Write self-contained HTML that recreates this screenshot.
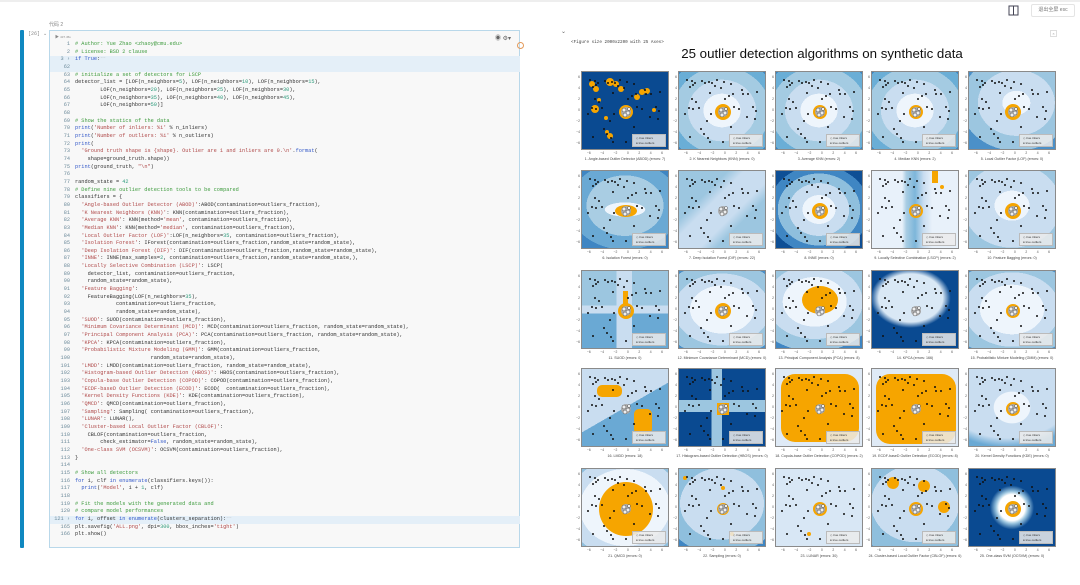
<!DOCTYPE html>
<html><head><meta charset="utf-8"><style>
*{margin:0;padding:0;box-sizing:border-box}
body{width:1080px;height:585px;background:#fff;position:relative;overflow:hidden;font-family:"Liberation Sans","Noto Sans CJK SC",sans-serif}
.a{position:absolute}
#code{position:absolute;left:49px;top:30px;width:471px;height:518px;background:#f8f8f8;border:1px solid #b9d8ea}
.ln{position:absolute;left:0;width:20px;text-align:right;color:#6c8a9a}
.cl{position:absolute;left:25px;white-space:pre;color:#333}
.row{position:absolute;left:0;width:470px;height:7.66px;font:5.25px/7.66px "Liberation Mono",monospace}
.hl{background:#e4eff8}
.c{color:#3c9a3c}.s{color:#b04a4a}.k{color:#3358c8}.n{color:#2a9a7a}
.p{position:absolute;width:88px;height:79px;border:1px solid #8a8a8a;overflow:hidden}
.p svg{position:absolute;left:0;top:0}
.rings{background:radial-gradient(ellipse 62px 56px at 50% 50%,#eef5fc 0 30%,#c9ddf0 30% 55%,#a4cbe2 55% 78%,#6aaed6 78% 95%,#3a85c2 95%)}
.navy{background:#0a4a91}
.lg{position:absolute;right:2px;bottom:2px;width:34px;height:13px;background:rgba(235,235,235,.85);border:.5px solid #bbb;font:3px/5px "Liberation Sans",sans-serif;color:#333;padding:1px 0 0 3px}
.cap{position:absolute;width:100px;text-align:center;font:3.6px "Liberation Sans",sans-serif;color:#444;white-space:nowrap}
.xt{position:absolute;width:88px;display:flex;justify-content:space-between;padding:0 6px;font:3.3px "Liberation Sans",sans-serif;color:#555}
.yt{position:absolute;width:6px;height:79px;display:flex;flex-direction:column;justify-content:space-between;padding:5px 0;font:3.3px/3.3px "Liberation Sans",sans-serif;color:#555;text-align:right}
</style></head><body>
<div class="a" style="left:0;top:0;width:1080px;height:2px;background:#eee"></div>
<svg class="a" style="left:1008px;top:5px" width="11" height="11"><rect x="1" y="1" width="9" height="9" fill="none" stroke="#445" stroke-width="1"/><line x1="5.5" y1="1" x2="5.5" y2="10" stroke="#445"/></svg>
<div class="a" style="left:1031px;top:4px;width:44px;height:13px;border:1px solid #e4e4e4;border-radius:2px;font-size:5px;line-height:11px;text-align:center;color:#777">退出全屏 esc</div>
<div class="a" style="left:1050px;top:30px;width:7px;height:7px;border:1px solid #ddd;font-size:4px;color:#999;text-align:center;line-height:5px">×</div>

<div class="a" style="left:49px;top:21px;font-size:5px;color:#888">代码 2</div>
<div class="a" style="left:20px;top:30px;width:4px;height:518px;background:#1088c0;border-radius:1px"></div>
<div class="a" style="left:28px;top:31px;font:5px 'Liberation Mono',monospace;color:#888">[26] ⌄</div>
<div id="code">
<div class="a" style="left:5px;top:3px;font-size:4px;color:#888">▶ <span style="font-size:3px">437.45s</span></div>
<div class="a" style="left:445px;top:2px;width:24px;font-size:6px;color:#666;white-space:nowrap">◉ ⚙▾</div>
<div class="a" style="left:467px;top:11px;width:7px;height:7px;border:1px solid #e49a5a;border-radius:50%"></div>
<div style="position:absolute;left:0;top:10px;width:470px">
<div class="row" style="top:0"><span class="ln">1</span><span class="cl c"># Author: Yue Zhao &lt;zhaoy@cmu.edu&gt;</span></div>
<div class="row" style="top:7.66px"><span class="ln">2</span><span class="cl c"># License: BSD 2 clause</span></div>
<div class="row hl" style="top:15.32px"><span class="ln">3 ›</span><span class="cl"><span class="k">if True</span>:<span style="color:#aaa">⋯</span></span></div>
<div class="row hl" style="top:22.98px"><span class="ln">62</span></div>
<div class="row" style="top:30.64px"><span class="ln">63</span><span class="cl c"># initialize a set of detectors for LSCP</span></div>
<div class="row" style="top:38.3px"><span class="ln">64</span><span class="cl">detector_list = [LOF(n_neighbors=<span class="n">5</span>), LOF(n_neighbors=<span class="n">10</span>), LOF(n_neighbors=<span class="n">15</span>),</span></div>
<div class="row" style="top:45.96px"><span class="ln">65</span><span class="cl">        LOF(n_neighbors=<span class="n">20</span>), LOF(n_neighbors=<span class="n">25</span>), LOF(n_neighbors=<span class="n">30</span>),</span></div>
<div class="row" style="top:53.62px"><span class="ln">66</span><span class="cl">        LOF(n_neighbors=<span class="n">35</span>), LOF(n_neighbors=<span class="n">40</span>), LOF(n_neighbors=<span class="n">45</span>),</span></div>
<div class="row" style="top:61.28px"><span class="ln">67</span><span class="cl">        LOF(n_neighbors=<span class="n">50</span>)]</span></div>
<div class="row" style="top:68.94px"><span class="ln">68</span></div>
<div class="row" style="top:76.6px"><span class="ln">69</span><span class="cl c"># Show the statics of the data</span></div>
<div class="row" style="top:84.26px"><span class="ln">70</span><span class="cl"><span class="k">print</span>(<span class="s">'Number of inliers: %i'</span> % n_inliers)</span></div>
<div class="row" style="top:91.92px"><span class="ln">71</span><span class="cl"><span class="k">print</span>(<span class="s">'Number of outliers: %i'</span> % n_outliers)</span></div>
<div class="row" style="top:99.58px"><span class="ln">72</span><span class="cl"><span class="k">print</span>(</span></div>
<div class="row" style="top:107.24px"><span class="ln">73</span><span class="cl">  <span class="s">'Ground truth shape is {shape}. Outlier are 1 and inliers are 0.\n'</span>.<span class="k">format</span>(</span></div>
<div class="row" style="top:114.9px"><span class="ln">74</span><span class="cl">    shape=ground_truth.shape))</span></div>
<div class="row" style="top:122.56px"><span class="ln">75</span><span class="cl"><span class="k">print</span>(ground_truth, <span class="s">"\n"</span>)</span></div>
<div class="row" style="top:130.22px"><span class="ln">76</span></div>
<div class="row" style="top:137.88px"><span class="ln">77</span><span class="cl">random_state = <span class="n">42</span></span></div>
<div class="row" style="top:145.54px"><span class="ln">78</span><span class="cl c"># Define nine outlier detection tools to be compared</span></div>
<div class="row" style="top:153.2px"><span class="ln">79</span><span class="cl">classifiers = {</span></div>
<div class="row" style="top:160.86px"><span class="ln">80</span><span class="cl">  <span class="s">'Angle-based Outlier Detector (ABOD)'</span>:ABOD(contamination=outliers_fraction),</span></div>
<div class="row" style="top:168.52px"><span class="ln">81</span><span class="cl">  <span class="s">'K Nearest Neighbors (KNN)'</span>: KNN(contamination=outliers_fraction),</span></div>
<div class="row" style="top:176.18px"><span class="ln">82</span><span class="cl">  <span class="s">'Average KNN'</span>: KNN(method=<span class="s">'mean'</span>, contamination=outliers_fraction),</span></div>
<div class="row" style="top:183.84px"><span class="ln">83</span><span class="cl">  <span class="s">'Median KNN'</span>: KNN(method=<span class="s">'median'</span>, contamination=outliers_fraction),</span></div>
<div class="row" style="top:191.5px"><span class="ln">84</span><span class="cl">  <span class="s">'Local Outlier Factor (LOF)'</span>:LOF(n_neighbors=<span class="n">35</span>, contamination=outliers_fraction),</span></div>
<div class="row" style="top:199.16px"><span class="ln">85</span><span class="cl">  <span class="s">'Isolation Forest'</span>: IForest(contamination=outliers_fraction,random_state=random_state),</span></div>
<div class="row" style="top:206.82px"><span class="ln">86</span><span class="cl">  <span class="s">'Deep Isolation Forest (DIF)'</span>: DIF(contamination=outliers_fraction,random_state=random_state),</span></div>
<div class="row" style="top:214.48px"><span class="ln">87</span><span class="cl">  <span class="s">'INNE'</span>: INNE(max_samples=<span class="n">2</span>, contamination=outliers_fraction,random_state=random_state,),</span></div>
<div class="row" style="top:222.14px"><span class="ln">88</span><span class="cl">  <span class="s">'Locally Selective Combination (LSCP)'</span>: LSCP(</span></div>
<div class="row" style="top:229.8px"><span class="ln">89</span><span class="cl">    detector_list, contamination=outliers_fraction,</span></div>
<div class="row" style="top:237.46px"><span class="ln">90</span><span class="cl">    random_state=random_state),</span></div>
<div class="row" style="top:245.12px"><span class="ln">91</span><span class="cl">  <span class="s">'Feature Bagging'</span>:</span></div>
<div class="row" style="top:252.78px"><span class="ln">92</span><span class="cl">    FeatureBagging(LOF(n_neighbors=<span class="n">35</span>),</span></div>
<div class="row" style="top:260.44px"><span class="ln">93</span><span class="cl">             contamination=outliers_fraction,</span></div>
<div class="row" style="top:268.1px"><span class="ln">94</span><span class="cl">             random_state=random_state),</span></div>
<div class="row" style="top:275.76px"><span class="ln">95</span><span class="cl">  <span class="s">'SUOD'</span>: SUOD(contamination=outliers_fraction),</span></div>
<div class="row" style="top:283.42px"><span class="ln">96</span><span class="cl">  <span class="s">'Minimum Covariance Determinant (MCD)'</span>: MCD(contamination=outliers_fraction, random_state=random_state),</span></div>
<div class="row" style="top:291.08px"><span class="ln">97</span><span class="cl">  <span class="s">'Principal Component Analysis (PCA)'</span>: PCA(contamination=outliers_fraction, random_state=random_state),</span></div>
<div class="row" style="top:298.74px"><span class="ln">98</span><span class="cl">  <span class="s">'KPCA'</span>: KPCA(contamination=outliers_fraction),</span></div>
<div class="row" style="top:306.4px"><span class="ln">99</span><span class="cl">  <span class="s">'Probabilistic Mixture Modeling (GMM)'</span>: GMM(contamination=outliers_fraction,</span></div>
<div class="row" style="top:314.06px"><span class="ln">100</span><span class="cl">                        random_state=random_state),</span></div>
<div class="row" style="top:321.72px"><span class="ln">101</span><span class="cl">  <span class="s">'LMDD'</span>: LMDD(contamination=outliers_fraction, random_state=random_state),</span></div>
<div class="row" style="top:329.38px"><span class="ln">102</span><span class="cl">  <span class="s">'Histogram-based Outlier Detection (HBOS)'</span>: HBOS(contamination=outliers_fraction),</span></div>
<div class="row" style="top:337.04px"><span class="ln">103</span><span class="cl">  <span class="s">'Copula-base Outlier Detection (COPOD)'</span>: COPOD(contamination=outliers_fraction),</span></div>
<div class="row" style="top:344.7px"><span class="ln">104</span><span class="cl">  <span class="s">'ECDF-baseD Outlier Detection (ECOD)'</span>: ECOD(  contamination=outliers_fraction),</span></div>
<div class="row" style="top:352.36px"><span class="ln">105</span><span class="cl">  <span class="s">'Kernel Density Functions (KDE)'</span>: KDE(contamination=outliers_fraction),</span></div>
<div class="row" style="top:360.02px"><span class="ln">106</span><span class="cl">  <span class="s">'QMCD'</span>: QMCD(contamination=outliers_fraction),</span></div>
<div class="row" style="top:367.68px"><span class="ln">107</span><span class="cl">  <span class="s">'Sampling'</span>: Sampling( contamination=outliers_fraction),</span></div>
<div class="row" style="top:375.34px"><span class="ln">108</span><span class="cl">  <span class="s">'LUNAR'</span>: LUNAR(),</span></div>
<div class="row" style="top:383px"><span class="ln">109</span><span class="cl">  <span class="s">'Cluster-based Local Outlier Factor (CBLOF)'</span>:</span></div>
<div class="row" style="top:390.66px"><span class="ln">110</span><span class="cl">    CBLOF(contamination=outliers_fraction,</span></div>
<div class="row" style="top:398.32px"><span class="ln">111</span><span class="cl">        check_estimator=<span class="k">False</span>, random_state=random_state),</span></div>
<div class="row" style="top:405.98px"><span class="ln">112</span><span class="cl">  <span class="s">'One-class SVM (OCSVM)'</span>: OCSVM(contamination=outliers_fraction),</span></div>
<div class="row" style="top:413.64px"><span class="ln">113</span><span class="cl">}</span></div>
<div class="row" style="top:421.3px"><span class="ln">114</span></div>
<div class="row" style="top:428.96px"><span class="ln">115</span><span class="cl c"># Show all detectors</span></div>
<div class="row" style="top:436.62px"><span class="ln">116</span><span class="cl"><span class="k">for</span> i, clf <span class="k">in enumerate</span>(classifiers.keys()):</span></div>
<div class="row" style="top:444.28px"><span class="ln">117</span><span class="cl">  <span class="k">print</span>(<span class="s">'Model'</span>, i + <span class="n">1</span>, clf)</span></div>
<div class="row" style="top:451.94px"><span class="ln">118</span></div>
<div class="row" style="top:459.6px"><span class="ln">119</span><span class="cl c"># Fit the models with the generated data and</span></div>
<div class="row" style="top:467.26px"><span class="ln">120</span><span class="cl c"># compare model performances</span></div>
<div class="row hl" style="top:474.92px"><span class="ln">121 ›</span><span class="cl"><span class="k">for</span> i, offset <span class="k">in enumerate</span>(clusters_separation):<span style="color:#aaa">⋯</span></span></div>
<div class="row" style="top:482.58px"><span class="ln">165</span><span class="cl">plt.savefig(<span class="s">'ALL.png'</span>, dpi=<span class="n">300</span>, bbox_inches=<span class="s">'tight'</span>)</span></div>
<div class="row" style="top:490.24px"><span class="ln">166</span><span class="cl">plt.show()</span></div>
</div>
</div>

<div class="a" style="left:561px;top:28px;font-size:6px;color:#666">⌄</div>
<div class="a" style="left:571px;top:40px;font:4.3px 'Liberation Mono',monospace;color:#444">&lt;Figure size 2000x2200 with 25 Axes&gt;</div>
<div class="a" style="left:560px;top:46px;width:524px;text-align:center;font-size:13.3px;color:#111">25 outlier detection algorithms on synthetic data</div>

<svg width="0" height="0" style="position:absolute"><defs>
<g id="d" fill="#111">
<circle cx="8" cy="8" r="1"/><circle cx="13" cy="9" r="1"/><circle cx="16" cy="11" r="1"/><circle cx="23" cy="9" r="1"/><circle cx="30" cy="10" r="1"/><circle cx="33" cy="11" r="1"/><circle cx="38" cy="8" r="1"/><circle cx="45" cy="10" r="1"/><circle cx="11" cy="15" r="1"/><circle cx="14" cy="13" r="1"/><circle cx="26" cy="11" r="1"/><circle cx="36" cy="14" r="1"/><circle cx="31" cy="21" r="1"/><circle cx="52" cy="12" r="1"/><circle cx="63" cy="18" r="1"/><circle cx="64" cy="22" r="1"/><circle cx="69" cy="22" r="1"/><circle cx="50" cy="24" r="1"/><circle cx="54" cy="22" r="1"/><circle cx="13" cy="27" r="1"/><circle cx="17" cy="30" r="1"/><circle cx="10" cy="36" r="1"/><circle cx="14" cy="37" r="1"/><circle cx="20" cy="36" r="1"/><circle cx="55" cy="35" r="1"/><circle cx="60" cy="37" r="1"/><circle cx="74" cy="35" r="1"/><circle cx="77" cy="39" r="1"/><circle cx="6" cy="42" r="1"/><circle cx="76" cy="47" r="1"/><circle cx="68" cy="45" r="1"/><circle cx="28" cy="49" r="1"/><circle cx="32" cy="42" r="1"/><circle cx="25" cy="62" r="1"/><circle cx="22" cy="57" r="1"/><circle cx="29" cy="66" r="1"/><circle cx="31" cy="70" r="1"/><circle cx="11" cy="65" r="1"/><circle cx="44" cy="70" r="1"/><circle cx="52" cy="55" r="1"/><circle cx="78" cy="20" r="1"/><circle cx="42" cy="16" r="1"/><circle cx="46" cy="27" r="1"/>
</g>
<g id="c"><circle cx="44" cy="40" r="5" fill="#aaa"/><circle cx="42" cy="38" r="2" fill="#eee" stroke="#555" stroke-width=".5"/><circle cx="46" cy="41" r="2" fill="#eee" stroke="#555" stroke-width=".5"/><circle cx="43" cy="43" r="2" fill="#eee" stroke="#555" stroke-width=".5"/><circle cx="47" cy="37" r="1.5" fill="#eee" stroke="#555" stroke-width=".5"/></g>
</defs></svg>

<!-- Row 1 -->
<div class="p navy" style="left:581px;top:71px"><svg width="88" height="79"><g fill="#f6a500"><circle cx="10" cy="12" r="3"/><circle cx="14" cy="17" r="3"/><circle cx="28" cy="10" r="4"/><circle cx="34" cy="12" r="3"/><circle cx="39" cy="17" r="3"/><circle cx="60" cy="20" r="3"/><circle cx="65" cy="19" r="3"/><circle cx="55" cy="25" r="3"/><circle cx="13" cy="37" r="4"/><circle cx="17" cy="28" r="2"/><circle cx="44" cy="40" r="7"/><circle cx="72" cy="38" r="2"/><circle cx="28" cy="64" r="3"/><circle cx="25" cy="60" r="2"/><circle cx="24" cy="46" r="2"/></g><use href="#d"/><use href="#c"/></svg><div class="lg">◇ true inliers<br>● true outliers</div></div>
<div class="p rings" style="left:678px;top:71px"><svg width="88" height="79"><circle cx="44" cy="40" r="8" fill="#f6a500"/><use href="#d"/><use href="#c"/></svg><div class="lg">◇ true inliers<br>● true outliers</div></div>
<div class="p rings" style="left:775px;top:71px"><svg width="88" height="79"><circle cx="44" cy="40" r="7" fill="#f6a500"/><use href="#d"/><use href="#c"/></svg><div class="lg">◇ true inliers<br>● true outliers</div></div>
<div class="p rings" style="left:871px;top:71px"><svg width="88" height="79"><circle cx="44" cy="40" r="7" fill="#f6a500"/><use href="#d"/><use href="#c"/></svg><div class="lg">◇ true inliers<br>● true outliers</div></div>
<div class="p" style="left:968px;top:71px;background:radial-gradient(ellipse 70px 60px at 55% 40%,#eef5fc 0 20%,#c9ddf0 20% 55%,#9cc6e0 55% 80%,#4b90c8 80%)"><svg width="88" height="79"><circle cx="44" cy="40" r="8" fill="#f6a500"/><use href="#d"/><use href="#c"/></svg><div class="lg">◇ true inliers<br>● true outliers</div></div>

<!-- Row 2 -->
<div class="p" style="left:581px;top:170px;background:radial-gradient(ellipse 40px 14px at 50% 50%,#eef5fc 0 50%,transparent 51%),radial-gradient(ellipse 70px 55px at 50% 45%,#a9cde3 0 55%,#6aa9d4 55% 80%,#3f86c3 80%)"><svg width="88" height="79"><ellipse cx="44" cy="40" rx="11" ry="6" fill="#f6a500"/><use href="#d"/><use href="#c"/></svg><div class="lg">◇ true inliers<br>● true outliers</div></div>
<div class="p" style="left:678px;top:170px;background:linear-gradient(135deg,#9cc6e0 0 30%,#c9ddf0 40% 60%,#9cc6e0 70%)"><svg width="88" height="79"><use href="#d"/><use href="#c"/></svg><div class="lg">◇ true inliers<br>● true outliers</div></div>
<div class="p" style="left:775px;top:170px;background:radial-gradient(ellipse 55px 48px at 50% 50%,#eef5fc 0 30%,#c9ddf0 30% 55%,#8fbfdd 55% 75%,#3f86c3 75% 92%,#0e4f95 92%)"><svg width="88" height="79"><circle cx="44" cy="40" r="8" fill="#f6a500"/><use href="#d"/><use href="#c"/></svg><div class="lg">◇ true inliers<br>● true outliers</div></div>
<div class="p" style="left:871px;top:170px;background:linear-gradient(90deg,#e8f1fa 0 35%,#a9cde3 40%,#7db6da 50%,#c9ddf0 60%,#e8f1fa 70%)"><svg width="88" height="79"><g fill="#f6a500"><rect x="60" y="0" width="6" height="12"/><circle cx="70" cy="16" r="2"/><circle cx="44" cy="40" r="7"/></g><use href="#d"/><use href="#c"/></svg><div class="lg">◇ true inliers<br>● true outliers</div></div>
<div class="p rings" style="left:968px;top:170px;background:radial-gradient(ellipse 70px 60px at 50% 45%,#eef5fc 0 25%,#c9ddf0 25% 70%,#9cc6e0 70%)"><svg width="88" height="79"><circle cx="44" cy="40" r="8" fill="#f6a500"/><use href="#d"/><use href="#c"/></svg><div class="lg">◇ true inliers<br>● true outliers</div></div>

<!-- Row 3 -->
<div class="p" style="left:581px;top:270px;background:linear-gradient(90deg,transparent 40%,#c9ddf0 40% 58%,transparent 58%),linear-gradient(#9cc6e0 0 45%,#c9ddf0 45% 55%,#6aa9d4 55%)"><svg width="88" height="79"><rect x="41" y="20" width="5" height="15" fill="#f6a500"/><circle cx="44" cy="40" r="8" fill="#f6a500"/><use href="#d"/><use href="#c"/></svg><div class="lg">◇ true inliers<br>● true outliers</div></div>
<div class="p rings" style="left:678px;top:270px;background:radial-gradient(ellipse 80px 60px at 50% 50%,#eef5fc 0 40%,#c9ddf0 40% 60%,#9cc6e0 60% 80%,#4b90c8 80%)"><svg width="88" height="79"><circle cx="44" cy="40" r="8" fill="#f6a500"/><use href="#d"/><use href="#c"/></svg><div class="lg">◇ true inliers<br>● true outliers</div></div>
<div class="p" style="left:775px;top:270px;background:radial-gradient(ellipse 80px 62px at 45% 40%,#eef5fc 0 40%,#c9ddf0 40% 60%,#9cc6e0 60% 80%,#3f86c3 80%)"><svg width="88" height="79"><ellipse cx="44" cy="29" rx="18" ry="14" fill="#f6a500"/><use href="#d"/><use href="#c"/></svg><div class="lg">◇ true inliers<br>● true outliers</div></div>
<div class="p navy" style="left:871px;top:270px;background:radial-gradient(ellipse 40px 30px at 45% 35%,#d9e8f5 0 80%,#0a4a91 100%)"><svg width="88" height="79"><use href="#d"/><use href="#c"/></svg><div class="lg">◇ true inliers<br>● true outliers</div></div>
<div class="p" style="left:968px;top:270px;background:radial-gradient(ellipse 80px 62px at 50% 50%,#eef5fc 0 40%,#c9ddf0 40% 60%,#9cc6e0 60% 80%,#4b90c8 80%)"><svg width="88" height="79"><circle cx="44" cy="40" r="7" fill="#f6a500"/><use href="#d"/><use href="#c"/></svg><div class="lg">◇ true inliers<br>● true outliers</div></div>

<!-- Row 4 -->
<div class="p" style="left:581px;top:368px;background:linear-gradient(150deg,#c9ddf0 0 50%,#6aa9d4 50%)"><svg width="88" height="79"><g fill="#f6a500"><rect x="15" y="16" width="25" height="12" rx="5"/><rect x="52" y="40" width="18" height="25" rx="5"/></g><use href="#d"/><use href="#c"/></svg><div class="lg">◇ true inliers<br>● true outliers</div></div>
<div class="p navy" style="left:678px;top:368px;background:linear-gradient(90deg,transparent 38%,#9cc6e0 38% 50%,transparent 50%),linear-gradient(transparent 40%,#9cc6e0 40% 56%,transparent 56%),#0a4a91"><svg width="88" height="79"><rect x="38" y="34" width="12" height="12" fill="#f6a500"/><use href="#d"/><use href="#c"/></svg><div class="lg">◇ true inliers<br>● true outliers</div></div>
<div class="p" style="left:775px;top:368px;background:#dfeaf6"><svg width="88" height="79"><rect x="5" y="5" width="78" height="68" rx="14" fill="#f6a500"/><use href="#d"/><use href="#c"/></svg><div class="lg">◇ true inliers<br>● true outliers</div></div>
<div class="p" style="left:871px;top:368px;background:#dfeaf6"><svg width="88" height="79"><rect x="4" y="5" width="80" height="70" rx="14" fill="#f6a500"/><use href="#d"/><use href="#c"/></svg><div class="lg">◇ true inliers<br>● true outliers</div></div>
<div class="p" style="left:968px;top:368px;background:radial-gradient(ellipse 30px 26px at 50% 50%,#eef5fc 0 60%,transparent 62%),radial-gradient(ellipse 90px 60px at 45% 35%,#c9ddf0 0 70%,#6aa9d4 85%)"><svg width="88" height="79"><circle cx="44" cy="40" r="7" fill="#f6a500"/><use href="#d"/><use href="#c"/></svg><div class="lg">◇ true inliers<br>● true outliers</div></div>

<!-- Row 5 -->
<div class="p" style="left:581px;top:468px;background:radial-gradient(ellipse 82px 70px at 50% 50%,#eef5fc 0 55%,#c9ddf0 55% 72%,#8fbfdd 72% 88%,#3f86c3 88%)"><svg width="88" height="79"><circle cx="44" cy="40" r="27" fill="#f6a500"/><use href="#d"/><use href="#c"/></svg><div class="lg">◇ true inliers<br>● true outliers</div></div>
<div class="p" style="left:678px;top:468px;background:radial-gradient(ellipse 70px 60px at 50% 45%,#c9ddf0 0 60%,#8fbfdd 60% 85%,#3f86c3 85%)"><svg width="88" height="79"><g fill="#f6a500"><circle cx="44" cy="40" r="6"/><circle cx="6" cy="9" r="2"/><circle cx="44" cy="19" r="2"/><circle cx="53" cy="65" r="2"/></g><use href="#d"/><use href="#c"/></svg><div class="lg">◇ true inliers<br>● true outliers</div></div>
<div class="p" style="left:775px;top:468px;background:radial-gradient(ellipse 90px 80px at 50% 50%,#d8e7f5 0 70%,#9cc6e0 85%,#4b90c8 100%)"><svg width="88" height="79"><g fill="#f6a500"><circle cx="44" cy="40" r="7"/><circle cx="33" cy="65" r="2"/></g><use href="#d"/><use href="#c"/></svg><div class="lg">◇ true inliers<br>● true outliers</div></div>
<div class="p" style="left:871px;top:468px;background:radial-gradient(ellipse 80px 70px at 50% 45%,#c9ddf0 0 55%,#8fbfdd 55% 80%,#3f86c3 80%)"><svg width="88" height="79"><g fill="#f6a500"><circle cx="44" cy="40" r="7"/><circle cx="21" cy="14" r="6"/><circle cx="52" cy="17" r="6"/><circle cx="72" cy="38" r="6"/></g><use href="#d"/><use href="#c"/></svg><div class="lg">◇ true inliers<br>● true outliers</div></div>
<div class="p navy" style="left:968px;top:468px;background:radial-gradient(circle at 50% 50%,#fff 0 13px,#9cc6e0 16px,#0a4a91 22px)"><svg width="88" height="79"><circle cx="44" cy="40" r="8" fill="#f6a500"/><use href="#d"/><use href="#c"/></svg><div class="lg">◇ true inliers<br>● true outliers</div></div>

<!-- ticks & captions -->
<div class="xt" style="left:581px;top:151px"><span>−6</span><span>−4</span><span>−2</span><span>0</span><span>2</span><span>4</span><span>6</span></div>
<div class="xt" style="left:678px;top:151px"><span>−6</span><span>−4</span><span>−2</span><span>0</span><span>2</span><span>4</span><span>6</span></div>
<div class="xt" style="left:775px;top:151px"><span>−6</span><span>−4</span><span>−2</span><span>0</span><span>2</span><span>4</span><span>6</span></div>
<div class="xt" style="left:871px;top:151px"><span>−6</span><span>−4</span><span>−2</span><span>0</span><span>2</span><span>4</span><span>6</span></div>
<div class="xt" style="left:968px;top:151px"><span>−6</span><span>−4</span><span>−2</span><span>0</span><span>2</span><span>4</span><span>6</span></div>
<div class="xt" style="left:581px;top:250px"><span>−6</span><span>−4</span><span>−2</span><span>0</span><span>2</span><span>4</span><span>6</span></div>
<div class="xt" style="left:678px;top:250px"><span>−6</span><span>−4</span><span>−2</span><span>0</span><span>2</span><span>4</span><span>6</span></div>
<div class="xt" style="left:775px;top:250px"><span>−6</span><span>−4</span><span>−2</span><span>0</span><span>2</span><span>4</span><span>6</span></div>
<div class="xt" style="left:871px;top:250px"><span>−6</span><span>−4</span><span>−2</span><span>0</span><span>2</span><span>4</span><span>6</span></div>
<div class="xt" style="left:968px;top:250px"><span>−6</span><span>−4</span><span>−2</span><span>0</span><span>2</span><span>4</span><span>6</span></div>
<div class="xt" style="left:581px;top:350px"><span>−6</span><span>−4</span><span>−2</span><span>0</span><span>2</span><span>4</span><span>6</span></div>
<div class="xt" style="left:678px;top:350px"><span>−6</span><span>−4</span><span>−2</span><span>0</span><span>2</span><span>4</span><span>6</span></div>
<div class="xt" style="left:775px;top:350px"><span>−6</span><span>−4</span><span>−2</span><span>0</span><span>2</span><span>4</span><span>6</span></div>
<div class="xt" style="left:871px;top:350px"><span>−6</span><span>−4</span><span>−2</span><span>0</span><span>2</span><span>4</span><span>6</span></div>
<div class="xt" style="left:968px;top:350px"><span>−6</span><span>−4</span><span>−2</span><span>0</span><span>2</span><span>4</span><span>6</span></div>
<div class="xt" style="left:581px;top:448px"><span>−6</span><span>−4</span><span>−2</span><span>0</span><span>2</span><span>4</span><span>6</span></div>
<div class="xt" style="left:678px;top:448px"><span>−6</span><span>−4</span><span>−2</span><span>0</span><span>2</span><span>4</span><span>6</span></div>
<div class="xt" style="left:775px;top:448px"><span>−6</span><span>−4</span><span>−2</span><span>0</span><span>2</span><span>4</span><span>6</span></div>
<div class="xt" style="left:871px;top:448px"><span>−6</span><span>−4</span><span>−2</span><span>0</span><span>2</span><span>4</span><span>6</span></div>
<div class="xt" style="left:968px;top:448px"><span>−6</span><span>−4</span><span>−2</span><span>0</span><span>2</span><span>4</span><span>6</span></div>
<div class="xt" style="left:581px;top:548px"><span>−6</span><span>−4</span><span>−2</span><span>0</span><span>2</span><span>4</span><span>6</span></div>
<div class="xt" style="left:678px;top:548px"><span>−6</span><span>−4</span><span>−2</span><span>0</span><span>2</span><span>4</span><span>6</span></div>
<div class="xt" style="left:775px;top:548px"><span>−6</span><span>−4</span><span>−2</span><span>0</span><span>2</span><span>4</span><span>6</span></div>
<div class="xt" style="left:871px;top:548px"><span>−6</span><span>−4</span><span>−2</span><span>0</span><span>2</span><span>4</span><span>6</span></div>
<div class="xt" style="left:968px;top:548px"><span>−6</span><span>−4</span><span>−2</span><span>0</span><span>2</span><span>4</span><span>6</span></div>

<div class="yt" style="left:574px;top:71px"><span>6</span><span>4</span><span>2</span><span>0</span><span>−2</span><span>−4</span><span>−6</span></div>
<div class="yt" style="left:671px;top:71px"><span>6</span><span>4</span><span>2</span><span>0</span><span>−2</span><span>−4</span><span>−6</span></div>
<div class="yt" style="left:768px;top:71px"><span>6</span><span>4</span><span>2</span><span>0</span><span>−2</span><span>−4</span><span>−6</span></div>
<div class="yt" style="left:864px;top:71px"><span>6</span><span>4</span><span>2</span><span>0</span><span>−2</span><span>−4</span><span>−6</span></div>
<div class="yt" style="left:961px;top:71px"><span>6</span><span>4</span><span>2</span><span>0</span><span>−2</span><span>−4</span><span>−6</span></div>
<div class="yt" style="left:574px;top:170px"><span>6</span><span>4</span><span>2</span><span>0</span><span>−2</span><span>−4</span><span>−6</span></div>
<div class="yt" style="left:671px;top:170px"><span>6</span><span>4</span><span>2</span><span>0</span><span>−2</span><span>−4</span><span>−6</span></div>
<div class="yt" style="left:768px;top:170px"><span>6</span><span>4</span><span>2</span><span>0</span><span>−2</span><span>−4</span><span>−6</span></div>
<div class="yt" style="left:864px;top:170px"><span>6</span><span>4</span><span>2</span><span>0</span><span>−2</span><span>−4</span><span>−6</span></div>
<div class="yt" style="left:961px;top:170px"><span>6</span><span>4</span><span>2</span><span>0</span><span>−2</span><span>−4</span><span>−6</span></div>
<div class="yt" style="left:574px;top:270px"><span>6</span><span>4</span><span>2</span><span>0</span><span>−2</span><span>−4</span><span>−6</span></div>
<div class="yt" style="left:671px;top:270px"><span>6</span><span>4</span><span>2</span><span>0</span><span>−2</span><span>−4</span><span>−6</span></div>
<div class="yt" style="left:768px;top:270px"><span>6</span><span>4</span><span>2</span><span>0</span><span>−2</span><span>−4</span><span>−6</span></div>
<div class="yt" style="left:864px;top:270px"><span>6</span><span>4</span><span>2</span><span>0</span><span>−2</span><span>−4</span><span>−6</span></div>
<div class="yt" style="left:961px;top:270px"><span>6</span><span>4</span><span>2</span><span>0</span><span>−2</span><span>−4</span><span>−6</span></div>
<div class="yt" style="left:574px;top:368px"><span>6</span><span>4</span><span>2</span><span>0</span><span>−2</span><span>−4</span><span>−6</span></div>
<div class="yt" style="left:671px;top:368px"><span>6</span><span>4</span><span>2</span><span>0</span><span>−2</span><span>−4</span><span>−6</span></div>
<div class="yt" style="left:768px;top:368px"><span>6</span><span>4</span><span>2</span><span>0</span><span>−2</span><span>−4</span><span>−6</span></div>
<div class="yt" style="left:864px;top:368px"><span>6</span><span>4</span><span>2</span><span>0</span><span>−2</span><span>−4</span><span>−6</span></div>
<div class="yt" style="left:961px;top:368px"><span>6</span><span>4</span><span>2</span><span>0</span><span>−2</span><span>−4</span><span>−6</span></div>
<div class="yt" style="left:574px;top:468px"><span>6</span><span>4</span><span>2</span><span>0</span><span>−2</span><span>−4</span><span>−6</span></div>
<div class="yt" style="left:671px;top:468px"><span>6</span><span>4</span><span>2</span><span>0</span><span>−2</span><span>−4</span><span>−6</span></div>
<div class="yt" style="left:768px;top:468px"><span>6</span><span>4</span><span>2</span><span>0</span><span>−2</span><span>−4</span><span>−6</span></div>
<div class="yt" style="left:864px;top:468px"><span>6</span><span>4</span><span>2</span><span>0</span><span>−2</span><span>−4</span><span>−6</span></div>
<div class="yt" style="left:961px;top:468px"><span>6</span><span>4</span><span>2</span><span>0</span><span>−2</span><span>−4</span><span>−6</span></div>

<div class="cap" style="left:575px;top:157px">1. Angle-based Outlier Detector (ABOD) (errors: 7)</div>
<div class="cap" style="left:672px;top:157px">2. K Nearest Neighbors (KNN) (errors: 0)</div>
<div class="cap" style="left:769px;top:157px">3. Average KNN (errors: 2)</div>
<div class="cap" style="left:865px;top:157px">4. Median KNN (errors: 2)</div>
<div class="cap" style="left:962px;top:157px">5. Local Outlier Factor (LOF) (errors: 0)</div>
<div class="cap" style="left:575px;top:256px">6. Isolation Forest (errors: 0)</div>
<div class="cap" style="left:672px;top:256px">7. Deep Isolation Forest (DIF) (errors: 22)</div>
<div class="cap" style="left:769px;top:256px">8. INNE (errors: 0)</div>
<div class="cap" style="left:865px;top:256px">9. Locally Selective Combination (LSCP) (errors: 2)</div>
<div class="cap" style="left:962px;top:256px">10. Feature Bagging (errors: 0)</div>
<div class="cap" style="left:575px;top:356px">11. SUOD (errors: 0)</div>
<div class="cap" style="left:672px;top:356px">12. Minimum Covariance Determinant (MCD) (errors: 0)</div>
<div class="cap" style="left:769px;top:356px">13. Principal Component Analysis (PCA) (errors: 8)</div>
<div class="cap" style="left:865px;top:356px">14. KPCA (errors: 166)</div>
<div class="cap" style="left:962px;top:356px">15. Probabilistic Mixture Modeling (GMM) (errors: 0)</div>
<div class="cap" style="left:575px;top:454px">16. LMDD (errors: 18)</div>
<div class="cap" style="left:672px;top:454px">17. Histogram-based Outlier Detection (HBOS) (errors: 0)</div>
<div class="cap" style="left:769px;top:454px">18. Copula-base Outlier Detection (COPOD) (errors: 2)</div>
<div class="cap" style="left:865px;top:454px">19. ECDF-baseD Outlier Detection (ECOD) (errors: 8)</div>
<div class="cap" style="left:962px;top:454px">20. Kernel Density Functions (KDE) (errors: 0)</div>
<div class="cap" style="left:575px;top:554px">21. QMCD (errors: 0)</div>
<div class="cap" style="left:672px;top:554px">22. Sampling (errors: 0)</div>
<div class="cap" style="left:769px;top:554px">23. LUNAR (errors: 30)</div>
<div class="cap" style="left:865px;top:554px">24. Cluster-based Local Outlier Factor (CBLOF) (errors: 6)</div>
<div class="cap" style="left:962px;top:554px">25. One-class SVM (OCSVM) (errors: 0)</div>
</body></html>
